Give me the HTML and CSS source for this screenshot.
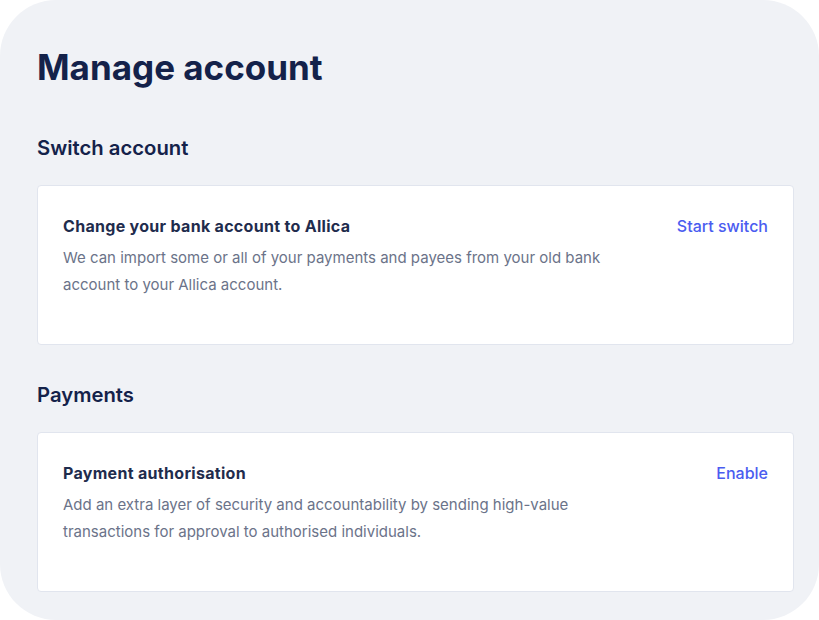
FILE: index.html
```html
<!DOCTYPE html>
<html lang="en">
<head>
<meta charset="utf-8">
<title>Manage account</title>
<link rel="stylesheet" href="styles.css">
</head>
<body>
<main class="panel">
  <h1 class="page-title">Manage account</h1>

  <section class="section section-switch">
    <h2 class="section-title">Switch account</h2>
    <div class="card">
      <div class="card-text">
        <h3 class="card-title">Change your bank account to Allica</h3>
        <p class="card-desc">We can import some or all of your payments and payees from your old bank account to your Allica account.</p>
      </div>
      <a class="card-action" href="#">Start switch</a>
    </div>
  </section>

  <section class="section section-payments">
    <h2 class="section-title">Payments</h2>
    <div class="card">
      <div class="card-text">
        <h3 class="card-title">Payment authorisation</h3>
        <p class="card-desc">Add an extra layer of security and accountability by sending high-value transactions for approval to authorised individuals.</p>
      </div>
      <a class="card-action" href="#">Enable</a>
    </div>
  </section>
</main>
</body>
</html>
```

FILE: styles.css
```css
* { box-sizing: border-box; }

html, body {
  margin: 0;
  padding: 0;
  background: #ffffff;
}

body {
  font-family: "Inter", "Noto Sans", "Liberation Sans", sans-serif;
  color: #14224a;
  -webkit-font-smoothing: antialiased;
}

.panel {
  width: 819px;
  height: 620px;
  background: #f0f2f6;
  border-radius: 56px;
  padding: 44px 25px 0 37px;
  display: flex;
  flex-direction: column;
}

.page-title {
  margin: 0;
  font-size: 35px;
  line-height: 46px;
  font-weight: 700;
  color: #14224a;
}

.section-title {
  margin: 0 0 23px 0;
  font-size: 20.3px;
  line-height: 28px;
  font-weight: 600;
  color: #14224a;
}

.section-switch { margin-top: 44px; }
.section-payments { margin-top: 36px; }

.card {
  background: #ffffff;
  border: 1px solid #e1e5ee;
  border-radius: 4px;
  height: 160px;
  padding: 28px 25px 0 25px;
  display: flex;
  justify-content: space-between;
  align-items: flex-start;
}

.card-title {
  margin: 0 0 6px 0;
  font-size: 16px;
  line-height: 24px;
  font-weight: 700;
  letter-spacing: 0.3px;
  color: #1f2c4d;
}

.card-desc {
  margin: 0;
  max-width: 560px;
  font-size: 15px;
  line-height: 27px;
  color: #6b7389;
}

.card-action {
  font-size: 16px;
  line-height: 24px;
  font-weight: 500;
  color: #4a5cf0;
  text-decoration: none;
  white-space: nowrap;
}
```
